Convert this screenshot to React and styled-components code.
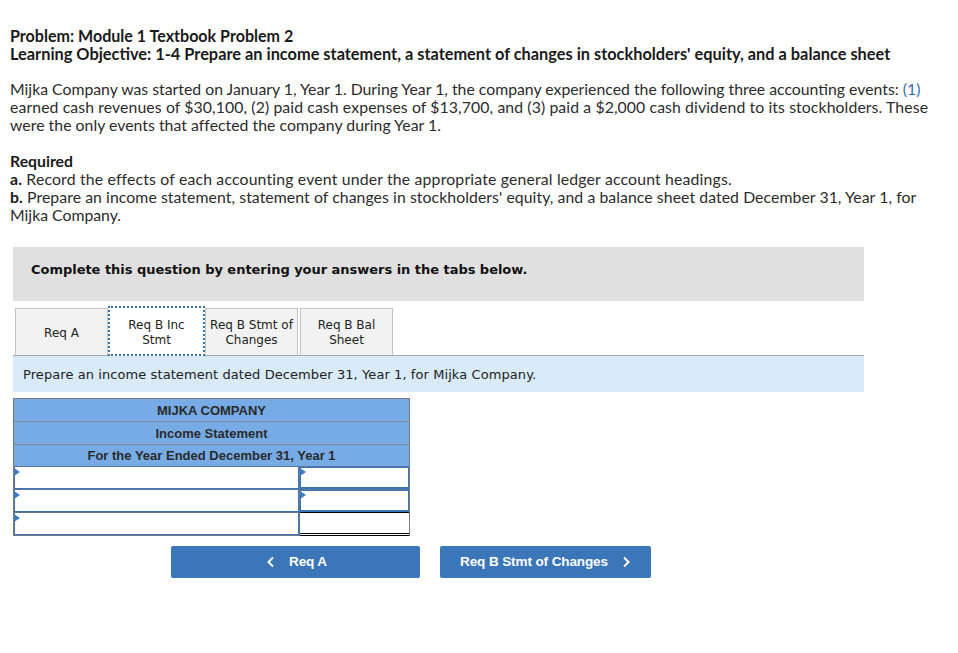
import React from "react";
import styled, { createGlobalStyle } from "styled-components";

const Global = createGlobalStyle`
  html, body { margin: 0; padding: 0; background: #fff; }
`;

const Page = styled.div`
  width: 958px;
  height: 653px;
  box-sizing: border-box;
  padding: 27px 0 0 10px;
  font-family: Lato, "Open Sans", sans-serif;
  font-size: 15.8px;
  line-height: 18px;
  color: #2b2b2b;
  overflow: hidden;
`;

const Heading = styled.div`
  font-weight: 700;
  font-size: ${(p) => p.$size}px;
  color: #1a1a1a;
  white-space: nowrap;
`;

const Paragraph = styled.div`
  margin-top: ${(p) => p.$top}px;
`;

const Line = styled.div`
  white-space: nowrap;
  letter-spacing: ${(p) => p.$track || 0}px;
`;

const Strong = styled.b`
  font-weight: 700;
  color: #1a1a1a;
`;

const LinkNum = styled.span`
  color: #2f6fb5;
`;

const Workspace = styled.div`
  margin: 23px 0 0 3px;
  width: 851px;
`;

const Banner = styled.div`
  height: 54px;
  box-sizing: border-box;
  padding: 0 0 9px 18px;
  background: #e0e0e0;
  display: flex;
  align-items: center;
  font-family: "DejaVu Sans", Verdana, sans-serif;
  font-weight: 700;
  font-size: 13px;
  letter-spacing: -0.03px;
  color: #111;
`;

const TabRow = styled.div`
  display: flex;
  align-items: flex-end;
  height: 54px;
  padding-left: 2px;
  gap: 2px;
  border-bottom: 1px solid #a9a9a9;
`;

const Tab = styled.div`
  box-sizing: border-box;
  width: ${(p) => p.$w}px;
  height: ${(p) => (p.$active ? 50 : 47)}px;
  margin: ${(p) => (p.$active ? "0 -2px -1px -2px" : "0")};
  padding-top: ${(p) => (p.$active ? 3 : 2)}px;
  display: flex;
  align-items: center;
  justify-content: center;
  text-align: center;
  font-family: "DejaVu Sans", Verdana, sans-serif;
  font-size: 12px;
  line-height: 15px;
  color: #222;
  position: relative;
  background: ${(p) => (p.$active ? "#fff" : "#f2f2f2")};
  border: ${(p) => (p.$active ? "2px dotted #3b75b8" : "1px solid #c4c4c4")};
  border-bottom: ${(p) => (p.$active ? "2px dotted #3b75b8" : "none")};
`;

const Instruction = styled.div`
  height: 36px;
  box-sizing: border-box;
  padding: 2px 0 0 10px;
  background: #d9eaf8;
  display: flex;
  align-items: center;
  font-family: "DejaVu Sans", Verdana, sans-serif;
  font-size: 13px;
  letter-spacing: 0.08px;
  color: #222;
`;

const Sheet = styled.div`
  margin-top: 6px;
  width: 397px;
  box-sizing: border-box;
  border: 1px solid #7a7a7a;
  border-bottom: none;
  font-family: "Liberation Sans", Arial, sans-serif;
`;

const TitleRow = styled.div`
  height: ${(p) => p.$h}px;
  box-sizing: border-box;
  padding-top: ${(p) => p.$nudge || 0}px;
  background: #77abe6;
  border-bottom: ${(p) => (p.$plain ? "none" : "1px solid #7f8a94")};
  display: flex;
  align-items: center;
  justify-content: center;
  font-weight: 700;
  font-size: 13px;
  line-height: 16px;
  color: #2a2a2a;
`;

const Grid = styled.div`
  display: grid;
  grid-template-columns: 286px 109px;
  grid-template-rows: 23px 23px 24px;
`;

const LabelCell = styled.div`
  position: relative;
  box-sizing: border-box;
  background: #fff;
  border-top: 1px solid #5f7796;
  border-left: 1px solid #3d74b5;
  border-right: 2px solid #4f78a8;
  border-bottom: ${(p) => (p.$last ? "1px solid #777c82" : "1px solid #3d74b5")};
  box-shadow: ${(p) => (p.$last ? "inset 0 -1px 0 #3d74b5" : "none")};
`;

const AmountCell = styled.div`
  position: relative;
  box-sizing: border-box;
  background: #fff;
  border-top: 1px solid #5f7796;
  border-left: 1px solid #3d74b5;
  border-right: 1px solid #3d74b5;
  border-bottom: 2px solid #3d74b5;
  box-shadow: inset 0 1px 0 #3d74b5;
`;

const Total = styled.div`
  box-sizing: border-box;
  background: #fff;
  border-top: 1px solid #000;
  border-bottom: 3px double #000;
`;

const Marker = styled.span`
  position: absolute;
  left: -1px;
  top: 1px;
  width: 0;
  height: 0;
  border-left: 6px solid #3d7cc4;
  border-top: 4px solid transparent;
  border-bottom: 4px solid transparent;
`;

const Nav = styled.div`
  display: flex;
  gap: 20px;
  margin: 10px 0 0 158px;
`;

const NavButton = styled.div`
  box-sizing: border-box;
  width: ${(p) => p.$w}px;
  height: 32px;
  padding-left: ${(p) => p.$shift || 0}px;
  border-radius: 2px;
  background: #3b76b9;
  color: #fff;
  display: flex;
  align-items: center;
  justify-content: center;
  gap: 14px;
  font-family: "Liberation Sans", Arial, sans-serif;
  font-weight: 700;
  font-size: 13.5px;
  letter-spacing: -0.1px;
`;

const Chevron = ({ dir }) => (
  <svg width="9" height="12" viewBox="0 0 9 12" fill="none" aria-hidden="true">
    <path
      d={dir === "left" ? "M7 1.5 2.5 6 7 10.5" : "M2 1.5 6.5 6 2 10.5"}
      stroke="#fff"
      strokeWidth="2"
    />
  </svg>
);

export default function App() {
  return (
    <Page>
      <Global />
      <Heading $size={16.07}>Problem: Module 1 Textbook Problem 2</Heading>
      <Heading $size={16.35}>
        Learning Objective: 1-4 Prepare an income statement, a statement of changes in stockholders' equity, and a balance sheet
      </Heading>
      <Paragraph $top={17}>
        <Line>
          Mijka Company was started on January 1, Year 1. During Year 1, the company experienced the following three accounting events: <LinkNum>(1)</LinkNum>
        </Line>
        <Line $track={0.1}>
          earned cash revenues of $30,100, (2) paid cash expenses of $13,700, and (3) paid a $2,000 cash dividend to its stockholders. These
        </Line>
        <Line $track={0.03}>were the only events that affected the company during Year 1.</Line>
      </Paragraph>
      <Paragraph $top={18}>
        <Line><Strong>Required</Strong></Line>
        <Line $track={0.17}>
          <Strong>a.</Strong> Record the effects of each accounting event under the appropriate general ledger account headings.
        </Line>
        <Line $track={0.07}>
          <Strong>b.</Strong> Prepare an income statement, statement of changes in stockholders' equity, and a balance sheet dated December 31, Year 1, for
        </Line>
        <Line>Mijka Company.</Line>
      </Paragraph>
      <Workspace>
        <Banner>Complete this question by entering your answers in the tabs below.</Banner>
        <TabRow>
          <Tab $w={93}>Req A</Tab>
          <Tab $w={97} $active>Req B Inc<br />Stmt</Tab>
          <Tab $w={93}>Req B Stmt of<br />Changes</Tab>
          <Tab $w={93}>Req B Bal<br />Sheet</Tab>
        </TabRow>
        <Instruction>Prepare an income statement dated December 31, Year 1, for Mijka Company.</Instruction>
        <Sheet>
          <TitleRow $h={23} $nudge={2}>MIJKA COMPANY</TitleRow>
          <TitleRow $h={23} $nudge={2}>Income Statement</TitleRow>
          <TitleRow $h={21} $plain>For the Year Ended December 31, Year 1</TitleRow>
          <Grid>
            <LabelCell><Marker /></LabelCell>
            <AmountCell><Marker /></AmountCell>
            <LabelCell><Marker /></LabelCell>
            <AmountCell><Marker /></AmountCell>
            <LabelCell $last><Marker /></LabelCell>
            <Total />
          </Grid>
        </Sheet>
        <Nav>
          <NavButton $w={249} $shift={2}><Chevron dir="left" />Req A</NavButton>
          <NavButton $w={211}>Req B Stmt of Changes<Chevron dir="right" /></NavButton>
        </Nav>
      </Workspace>
    </Page>
  );
}
